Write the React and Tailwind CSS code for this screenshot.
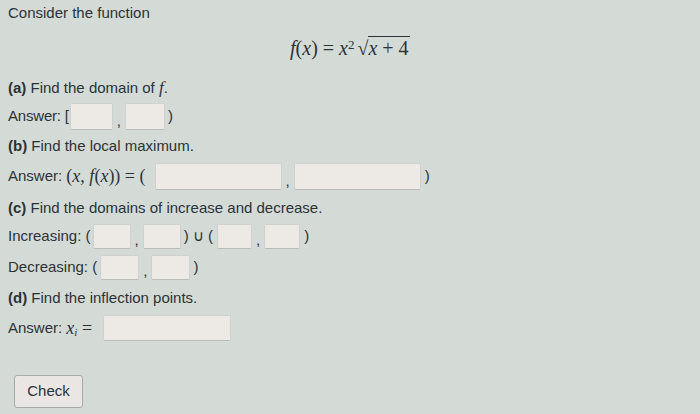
const sans = { fontFamily: '"Liberation Sans", Arial, sans-serif' };

function Box({ w, h = 'h-full' }) {
  return <div className={`${w} ${h} rounded-[2px] border border-[#cfd1cd] border-b-[#b9bcb8] bg-[#edeae6]`} />;
}

function Comma() {
  return <span className="mx-[4px] self-end pb-[2px] text-[15px] leading-none">,</span>;
}

function M({ children }) {
  return <span className="font-['Liberation_Serif',serif] text-[18px]">{children}</span>;
}

function I({ children }) {
  return <span className="font-['Liberation_Serif',serif] text-[17px] italic">{children}</span>;
}

export default function App() {
  return (
    <div
      className="flex h-[414px] w-[700px] flex-col bg-[#d4dbd7] pl-[8px] text-[15px] text-[#2c3236]"
      style={sans}
    >
      <div className="mt-[3px] flex h-5 items-center">Consider the function</div>

      <div className="mt-[15px] flex h-5 items-center pl-[282px]">
        <span className="font-['Liberation_Serif',serif] text-[20px] whitespace-nowrap">
          <i>f</i>(<i>x</i>) = <i>x</i>
          <sup className="text-[13px]">2</sup>
          <span className="ml-[3px]">√</span>
          <span className="border-t border-[#2c3236] pr-[1px]"><i>x</i> + 4</span>
        </span>
      </div>

      <div className="mt-[20px] flex h-5 items-center">
        <b>(a)</b>&nbsp;Find the domain of&nbsp;<I>f</I>.
      </div>

      <div className="mt-[5px] flex h-[27px] items-center">
        <span className="tracking-[-0.2px]">Answer: [</span>
        <div className="ml-[1px] flex h-full items-center">
          <Box w="w-[43px]" />
          <Comma />
          <Box w="w-[40px]" />
          <span className="ml-[3px]">)</span>
        </div>
      </div>

      <div className="mt-[6px] flex h-5 items-center">
        <b>(b)</b>&nbsp;Find the local maximum.
      </div>

      <div className="mt-[7px] flex h-[27px] items-center">
        <span>Answer:&nbsp;</span>
        <M>(<i>x</i>, <i>f</i>(<i>x</i>)) = (</M>
        <div className="ml-[9px] flex h-full items-center">
          <Box w="w-[127px]" />
          <Comma />
          <Box w="w-[127px]" />
          <span className="ml-[4px]">)</span>
        </div>
      </div>

      <div className="mt-[8px] flex h-5 items-center">
        <b>(c)</b>&nbsp;Find the domains of increase and decrease.
      </div>

      <div className="mt-[6px] flex h-[25px] items-center">
        <span>Increasing: (</span>
        <div className="ml-[2px] flex h-full items-center">
          <Box w="w-[38px]" />
          <Comma />
          <Box w="w-[38px]" />
          <span className="ml-[3px]">) ∪ (</span>
          <div className="ml-[4px] flex h-full items-center">
            <Box w="w-[35px]" />
            <Comma />
            <Box w="w-[36px]" />
            <span className="ml-[4px]">)</span>
          </div>
        </div>
      </div>

      <div className="mt-[6px] flex h-[25px] items-center">
        <span>Decreasing: (</span>
        <div className="ml-[3px] flex h-full items-center">
          <Box w="w-[39px]" />
          <Comma />
          <Box w="w-[39px]" />
          <span className="ml-[3px]">)</span>
        </div>
      </div>

      <div className="mt-[8px] flex h-5 items-center">
        <b>(d)</b>&nbsp;Find the inflection points.
      </div>

      <div className="mt-[7px] flex h-[26px] items-center">
        <span>Answer:&nbsp;</span>
        <M>
          <i>x</i>
          <sub className="text-[11px] italic">i</sub> =
        </M>
        <div className="ml-[11px] flex h-full items-center">
          <Box w="w-[128px]" />
        </div>
      </div>

      <div className="mt-[34px] pl-[6px]">
        <button className="h-[33px] w-[69px] rounded-[3px] border border-[#a7aaa8] bg-[#e9e6e3] text-[15px] text-[#2c3236]">
          Check
        </button>
      </div>
    </div>
  );
}
